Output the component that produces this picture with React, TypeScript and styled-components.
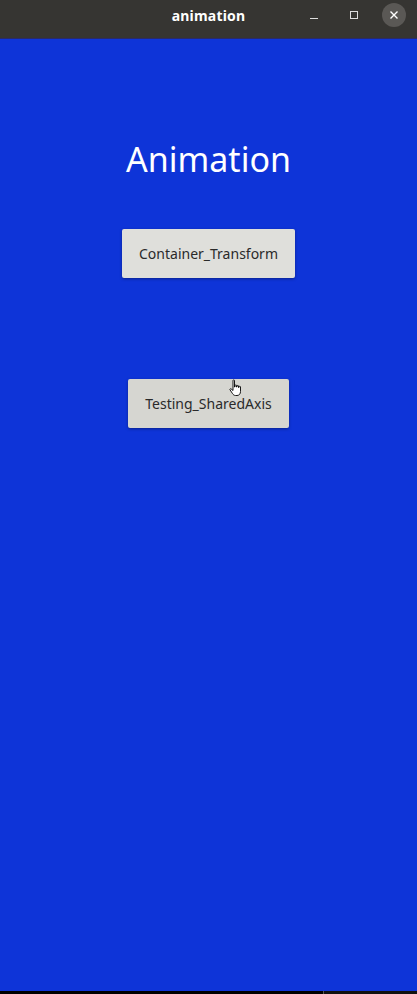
import React from "react";
import styled, { createGlobalStyle } from "styled-components";

const Global = createGlobalStyle`
  html, body { margin: 0; padding: 0; }
  body { width: 417px; height: 994px; overflow: hidden; font-family: "Noto Sans", "Open Sans", sans-serif; }
`;

const Window = styled.div`
  width: 417px;
  height: 994px;
  display: flex;
  flex-direction: column;
  background: #000;
`;

const TitleBar = styled.div`
  height: 30px;
  padding-bottom: 8px;
  background: #363532;
  display: grid;
  grid-template-columns: 1fr auto 1fr;
  align-items: center;
  color: #fff;
  border-bottom: 1px solid #2a2a6a;
`;

const Title = styled.div`
  font-family: "Noto Sans", sans-serif;
  font-weight: 700;
  font-size: 14px;
  letter-spacing: 0.2px;
`;

const Controls = styled.div`
  display: flex;
  justify-content: flex-end;
  align-items: center;
  padding-right: 11px;
`;

const Ctl = styled.div<{ $round?: boolean }>`
  width: 24px;
  height: 24px;
  margin-left: 16px;
  display: flex;
  align-items: center;
  justify-content: center;
  border-radius: 50%;
  background: ${(p) => (p.$round ? "#5a5855" : "transparent")};
`;

const Content = styled.div`
  flex: 1;
  background: #0e34d8;
  display: flex;
  flex-direction: column;
  align-items: center;
  position: relative;
`;

const Heading = styled.h1`
  margin: 97px 0 0;
  font-family: "Noto Sans", sans-serif;
  font-weight: 400;
  font-size: 34px;
  line-height: 46px;
  color: #fff;
`;

const Button = styled.button<{ $hover?: boolean; $top: number }>`
  margin-top: ${(p) => p.$top}px;
  height: 49px;
  padding: 0 17px;
  border: none;
  border-radius: 2px;
  background: ${(p) => (p.$hover ? "#d6d6d1" : "#dfdfdb")};
  color: #2a2a2a;
  font-family: "Noto Sans", sans-serif;
  font-size: 14px;
  box-shadow: 0 1px 3px rgba(0, 0, 0, 0.35);
  cursor: pointer;
`;

const Cursor = styled.svg`
  position: absolute;
  left: 229px;
  top: 340px;
`;

const Bottom = styled.div`
  height: 3px;
  background: #000;
  display: flex;
  justify-content: flex-end;
`;

const BottomMark = styled.div`
  width: 93px;
  height: 3px;
  border-left: 1px solid #555;
  background: #111;
`;

export default function App() {
  return (
    <Window>
      <Global />
      <TitleBar>
        <div />
        <Title>animation</Title>
        <Controls>
          <Ctl>
            <svg width="12" height="12" viewBox="0 0 12 12">
              <rect x="2" y="9" width="8" height="1" fill="#ddd" />
            </svg>
          </Ctl>
          <Ctl>
            <svg width="12" height="12" viewBox="0 0 12 12">
              <rect x="2.5" y="2.5" width="7" height="7" fill="none" stroke="#ddd" strokeWidth="1" />
            </svg>
          </Ctl>
          <Ctl $round>
            <svg width="12" height="12" viewBox="0 0 12 12">
              <path d="M2.5 2.5 L9.5 9.5 M9.5 2.5 L2.5 9.5" stroke="#fff" strokeWidth="1.4" />
            </svg>
          </Ctl>
        </Controls>
      </TitleBar>
      <Content>
        <Heading>Animation</Heading>
        <Button $top={47}>Container_Transform</Button>
        <Button $top={101} $hover>Testing_SharedAxis</Button>
        <Cursor width="16" height="20" viewBox="0 0 16 20">
          <path
            d="M4 1.5 C4 0.7 5.5 0.7 5.5 1.5 V8 H6 V6.5 C6 5.8 7.5 5.8 7.5 6.5 V8 H8 V7 C8 6.3 9.5 6.3 9.5 7 V8.5 H10 V7.8 C10 7.1 11.5 7.1 11.5 7.8 V12.5 C11.5 15 10 16.5 8 16.5 H6.5 C5 16.5 4.2 15.6 3.4 14.4 L1 10.8 C0.6 10.1 1.5 9.4 2.1 9.9 L4 11.5 Z"
            fill="#fff"
            stroke="#000"
            strokeWidth="0.9"
            strokeLinejoin="round"
          />
        </Cursor>
      </Content>
      <Bottom>
        <BottomMark />
      </Bottom>
    </Window>
  );
}
